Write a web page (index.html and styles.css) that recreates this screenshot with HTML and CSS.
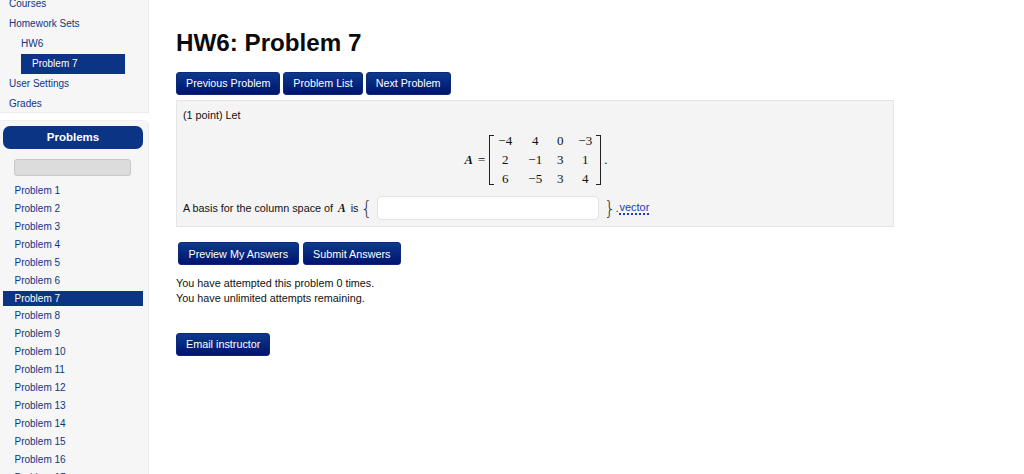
FILE: index.html
```html
<!DOCTYPE html>
<html lang="en">
<head>
<meta charset="utf-8">
<title>HW6: Problem 7</title>
<link rel="stylesheet" href="styles.css">
</head>
<body>
<div class="page">
  <aside class="sidebar">
    <nav class="panel site-nav">
      <a class="nav-item">Courses</a>
      <a class="nav-item">Homework Sets</a>
      <a class="nav-item sub">HW6</a>
      <a class="nav-item sub current">Problem 7</a>
      <a class="nav-item">User Settings</a>
      <a class="nav-item">Grades</a>
    </nav>
    <section class="panel problems">
      <h2 class="problems-title">Problems</h2>
      <div class="progress"></div>
      <ul class="problem-list">
        <li>Problem 1</li><li>Problem 2</li><li>Problem 3</li><li>Problem 4</li>
        <li>Problem 5</li><li>Problem 6</li><li class="active">Problem 7</li><li>Problem 8</li>
        <li>Problem 9</li><li>Problem 10</li><li>Problem 11</li><li>Problem 12</li>
        <li>Problem 13</li><li>Problem 14</li><li>Problem 15</li><li>Problem 16</li>
        <li>Problem 17</li>
      </ul>
    </section>
  </aside>
  <main class="main">
    <h1 class="title">HW6: Problem 7</h1>
    <div class="btn-row nav-row">
      <a class="btn">Previous Problem</a>
      <a class="btn">Problem List</a>
      <a class="btn">Next Problem</a>
    </div>
    <div class="problem-box">
      <p class="lead">(1 point) Let</p>
      <div class="equation">
        <span class="math-var">A</span><span class="eq">=</span>
        <div class="matrix">
          <span>&minus;4</span><span>4</span><span>0</span><span>&minus;3</span>
          <span>2</span><span>&minus;1</span><span>3</span><span>1</span>
          <span>6</span><span>&minus;5</span><span>3</span><span>4</span>
        </div>
        <span class="dot">.</span>
      </div>
      <div class="answer-line">
        <span class="answer-text">A basis for the column space of <span class="math-var small">A</span> is</span>
        <span class="brace open">{</span>
        <input class="answer" type="text" aria-label="answer">
        <span class="brace close">}</span>
        <span class="small-dot">.</span>
        <a class="vector">vector</a>
      </div>
    </div>
    <div class="btn-row submit-row">
      <a class="btn">Preview My Answers</a>
      <a class="btn">Submit Answers</a>
    </div>
    <p class="attempts">You have attempted this problem 0 times.<br>You have unlimited attempts remaining.</p>
    <a class="btn email">Email instructor</a>
  </main>
</div>
</body>
</html>
```
FILE: styles.css
```css
* { box-sizing: border-box; }
html, body { margin: 0; height: 474px; overflow: hidden; background: #fff; }
body { font-family: "Liberation Sans", Arial, sans-serif; font-size: 10.8px; color: #111; }
.page { display: flex; height: 474px; overflow: hidden; }

.sidebar { width: 149px; flex: none; display: flex; flex-direction: column; gap: 7px; margin-top: -6px; font-size: 10px; }
.panel { background: #f6f6f6; border-right: 1px solid #ebebeb; }
.site-nav { height: 119px; border-bottom: 1px solid #ebebeb; padding-left: 9px; display: flex; flex-direction: column; }
.nav-item { height: 20px; line-height: 20px; color: #0f3583; }
.nav-item.sub { margin-left: 12px; width: 104px; }
.nav-item.current { background: #0c3484; color: #fff; padding-left: 11px; }

.problems { flex: 1; border-radius: 0 6px 0 0; padding: 5px 5px 0 3px; min-height: 360px; border-top: 1px solid #efefef; }
.problems-title { margin: 0; height: 23px; line-height: 22px; text-align: center; background: #0c3484; color: #fff; border-radius: 7px; font-size: 11.5px; font-weight: bold; }
.progress { height: 17px; margin: 10px 12px 5px 11px; background: #dcdcdc; border: 1px solid #c8c8c8; border-radius: 3px; }
.problem-list { list-style: none; margin: 0; padding: 0; }
.problem-list li { height: 17.93px; line-height: 19px; padding-left: 11.5px; color: #0f3583; }
.problem-list li.active { background: #0c3484; color: #fff; line-height: 15px; height: 15px; margin: 2px 0 0.93px; }

.main { flex: 1; padding: 0 0 0 27px; min-width: 0; }
.title { margin: 29px 0 0; height: 27px; line-height: 27px; font-size: 24.2px; font-weight: bold; color: #0b0b0b; }
.btn-row { display: flex; gap: 3px; margin-top: 16px; }
.nav-row { font-size: 10.7px; }
.btn { display: inline-block; height: 23px; line-height: 20px; padding: 0 9px; color: #fff; background: linear-gradient(#0c3a8c, #00136f); border: 1px solid #0a2a78; border-radius: 3px; white-space: nowrap; }
.problem-box { width: 718px; height: 127px; margin-top: 5px; background: #f4f4f4; border: 1px solid #e5e5e5; padding: 0 0 0 6px; color: #111; }
.lead { margin: 8px 0 0; line-height: 13px; }
.equation { display: flex; align-items: center; justify-content: center; height: 50px; margin-top: 13px; font-family: "Liberation Serif", "Times New Roman", serif; font-size: 13px; padding-right: 4px; }
.math-var { font-family: "Liberation Serif", "Times New Roman", serif; font-style: italic; font-weight: bold; font-size: 12.5px; }
.math-var.small { font-size: 11.5px; margin: 0 2px; }
.eq { margin: 0 4px 0 5px; }
.matrix { display: grid; grid-template-columns: 30px 30px 20px 30px; grid-auto-rows: 18.7px; align-items: center; justify-items: center; width: 112px; height: 50px; border-left: 1px solid #222; border-right: 1px solid #222; position: relative; justify-content: center; align-content: center; }
.matrix::before, .matrix::after { content: ""; position: absolute; top: 0; bottom: 0; width: 4px; border-top: 1px solid #222; border-bottom: 1px solid #222; }
.matrix::before { left: 0; }
.matrix::after { right: 0; }
.dot { margin-left: 3px; }
.answer-line { display: flex; align-items: center; height: 24px; margin-top: 11px; }
.answer-text { white-space: nowrap; }
.brace { font-family: "DejaVu Sans", sans-serif; font-weight: 200; font-size: 19px; line-height: 24px; color: #333; }
.brace.open { margin: 0 1px 0 2px; }
.brace.close { margin-left: 5px; }
.answer { width: 222px; height: 24px; background: #fff; border: 1px solid #e2e2e2; border-radius: 4px; margin: 0 0 0 3px; padding: 0; }
.small-dot { margin: 0 1px 0 0; font-family: "Liberation Serif", serif; }
.vector { color: #1b3cc0; border-bottom: 2px dotted #1b3cc0; line-height: 11px; font-size: 11px; }
.submit-row { margin: 15px 0 0 2px; gap: 4px; }
.submit-row .btn { padding: 0 9.5px; line-height: 22px; }
.attempts { margin: 11px 0 0; line-height: 15px; color: #111; }
.email { margin-top: 27px; }
```
